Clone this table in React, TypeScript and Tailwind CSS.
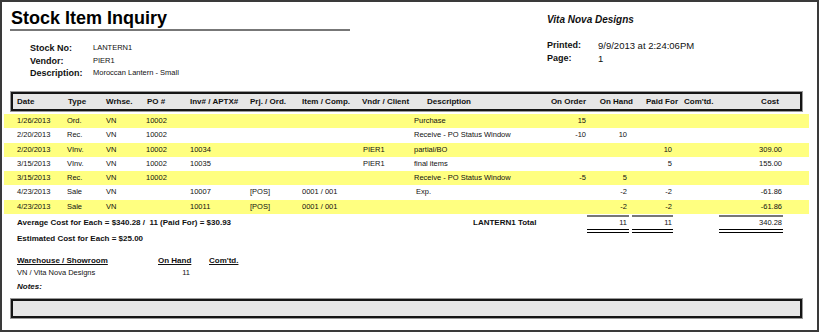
import React from 'react'

type Movement = {
  date: string
  type: string
  whse: string
  po: string
  inv: string
  prj: string
  item: string
  vndr: string
  desc: string
  onOrder: string
  onHand: string
  paidFor: string
  comtd: string
  cost: string
}

const rows: Movement[] = [
  { date: '1/26/2013', type: 'Ord.', whse: 'VN', po: '10002', inv: '', prj: '', item: '', vndr: '', desc: 'Purchase', onOrder: '15', onHand: '', paidFor: '', comtd: '', cost: '' },
  { date: '2/20/2013', type: 'Rec.', whse: 'VN', po: '10002', inv: '', prj: '', item: '', vndr: '', desc: 'Receive - PO Status Window', onOrder: '-10', onHand: '10', paidFor: '', comtd: '', cost: '' },
  { date: '2/20/2013', type: 'VInv.', whse: 'VN', po: '10002', inv: '10034', prj: '', item: '', vndr: 'PIER1', desc: 'partial/BO', onOrder: '', onHand: '', paidFor: '10', comtd: '', cost: '309.00' },
  { date: '3/15/2013', type: 'VInv.', whse: 'VN', po: '10002', inv: '10035', prj: '', item: '', vndr: 'PIER1', desc: 'final items', onOrder: '', onHand: '', paidFor: '5', comtd: '', cost: '155.00' },
  { date: '3/15/2013', type: 'Rec.', whse: 'VN', po: '10002', inv: '', prj: '', item: '', vndr: '', desc: 'Receive - PO Status Window', onOrder: '-5', onHand: '5', paidFor: '', comtd: '', cost: '' },
  { date: '4/23/2013', type: 'Sale', whse: 'VN', po: '', inv: '10007', prj: '[POS]', item: '0001 / 001', vndr: '', desc: '\u00a0Exp.', onOrder: '', onHand: '-2', paidFor: '-2', comtd: '', cost: '-61.86' },
  { date: '4/23/2013', type: 'Sale', whse: 'VN', po: '', inv: '10011', prj: '[POS]', item: '0001 / 001', vndr: '', desc: '', onOrder: '', onHand: '-2', paidFor: '-2', comtd: '', cost: '-61.86' },
]

const font = { fontFamily: '"Liberation Sans", Arial, sans-serif' }

// total cell: grey rule above, double rule below
const totalCell =
  'border-t-2 border-t-[#777] border-b-4 border-b-black [border-bottom-style:double] text-right text-[7.5px] leading-[11px]'

export default function App() {
  return (
    <div
      className="w-[819px] h-[332px] bg-white text-[#111] overflow-hidden shadow-[inset_0_0_0_2px_#3a3a3a]"
      style={font}
    >
      {/* top section */}
      <div className="flex h-[92px]">
        <div className="w-[547px]">
          <div className="ml-[10px] mt-[7px] w-[340px] pl-[1px] border-b-2 border-[#777] text-[18px] leading-[22px] font-bold text-black">
            Stock Item Inquiry
          </div>
          <div className="ml-[30px] mt-[11px] grid grid-cols-[63px_1fr] leading-[12.5px]">
            <div className="text-[9px] font-bold">Stock No:</div>
            <div className="text-[7.5px]">LANTERN1</div>
            <div className="text-[9px] font-bold">Vendor:</div>
            <div className="text-[7.5px]">PIER1</div>
            <div className="text-[9px] font-bold">Description:</div>
            <div className="text-[7.5px]">Moroccan Lantern - Small</div>
          </div>
        </div>
        <div>
          <div className="mt-[13px] text-[10px] leading-[14px] font-bold italic">Vita Nova Designs</div>
          <div className="mt-[11.5px] grid grid-cols-[51px_1fr] leading-[13px]">
            <div className="text-[9px] font-bold">Printed:</div>
            <div className="text-[9.5px]">9/9/2013 at 2:24:06PM</div>
            <div className="text-[9px] font-bold">Page:</div>
            <div className="text-[9.5px]">1</div>
          </div>
        </div>
      </div>

      {/* column header */}
      <div className="ml-[11px] w-[791px] h-[19px] border-2 border-[#151515] bg-[#e6e6e6] ring-1 ring-[#999] flex items-center pl-[4px] text-[8px] font-bold">
        <div className="w-[51px]">Date</div>
        <div className="w-[38px]">Type</div>
        <div className="w-[41px]">Wrhse.</div>
        <div className="w-[43px]">PO #</div>
        <div className="w-[60px]">Inv# / APTX#</div>
        <div className="w-[52px]">Prj. / Ord.</div>
        <div className="w-[60px]">Item / Comp.</div>
        <div className="w-[65px]">Vndr / Client</div>
        <div className="w-[110px]">Description</div>
        <div className="w-[49px] text-right">On Order</div>
        <div className="w-[47px] text-right">On Hand</div>
        <div className="w-[45px] text-right">Paid For</div>
        <div className="w-[62px] pl-[6px]">Com'td.</div>
        <div className="w-[60px] text-center">Cost</div>
      </div>

      {/* rows */}
      <div className="mt-[3px] ml-[4px] w-[805px] text-[7.5px]">
        {rows.map((r, i) => (
          <div
            key={i}
            className={
              'flex h-[14.3px] leading-[14.3px] pl-[13px] whitespace-nowrap ' +
              (i % 2 === 0 ? 'bg-[#ffff80]' : 'bg-white')
            }
          >
            <div className="w-[50px]">{r.date}</div>
            <div className="w-[39px]">{r.type}</div>
            <div className="w-[40px]">{r.whse}</div>
            <div className="w-[44px]">{r.po}</div>
            <div className="w-[60px]">{r.inv}</div>
            <div className="w-[52px]">{r.prj}</div>
            <div className="w-[61px]">{r.item}</div>
            <div className="w-[51px]">{r.vndr}</div>
            <div className="w-[130px]">{r.desc}</div>
            <div className="w-[42px] text-right">{r.onOrder}</div>
            <div className="w-[41px] text-right">{r.onHand}</div>
            <div className="w-[45px] text-right">{r.paidFor}</div>
            <div className="w-[48px]">{r.comtd}</div>
            <div className="w-[62px] text-right">{r.cost}</div>
          </div>
        ))}
      </div>

      {/* totals */}
      <div className="flex h-[19px] pt-[1px] text-[8px]">
        <div className="w-[473px] pl-[17px] font-bold leading-[16px] whitespace-pre">
          Average Cost for Each = $340.28 /  11 (Paid For) = $30.93
        </div>
        <div className="w-[114px] font-bold leading-[16px]">LANTERN1 Total</div>
        <div className={'w-[42px] pr-[2px] ' + totalCell}>11</div>
        <div className={'w-[41px] ml-[3px] pr-[1px] ' + totalCell}>11</div>
        <div className={'w-[64px] ml-[46px] pr-[1px] ' + totalCell}>340.28</div>
      </div>

      <div className="pl-[17px] text-[8px] font-bold leading-[12px]">Estimated Cost for Each = $25.00</div>

      {/* warehouse */}
      <div className="mt-[10px] pl-[17px] flex text-[8px] font-bold leading-[12px] underline">
        <div className="w-[141px]">Warehouse / Showroom</div>
        <div className="w-[34px]">On Hand</div>
        <div className="ml-[17px]">Com'td.</div>
      </div>
      <div className="pl-[17px] flex text-[7.5px] leading-[12px]">
        <div className="w-[141px]">VN / Vita Nova Designs</div>
        <div className="w-[34px] text-right pr-[2px]">11</div>
      </div>

      <div className="mt-[2px] pl-[17px] text-[8px] font-bold italic leading-[12px]">Notes:</div>

      <div className="mt-[6px] ml-[11px] w-[791px] h-[19px] border-2 border-[#151515] bg-[#e6e6e6] ring-1 ring-[#999]" />
    </div>
  )
}
